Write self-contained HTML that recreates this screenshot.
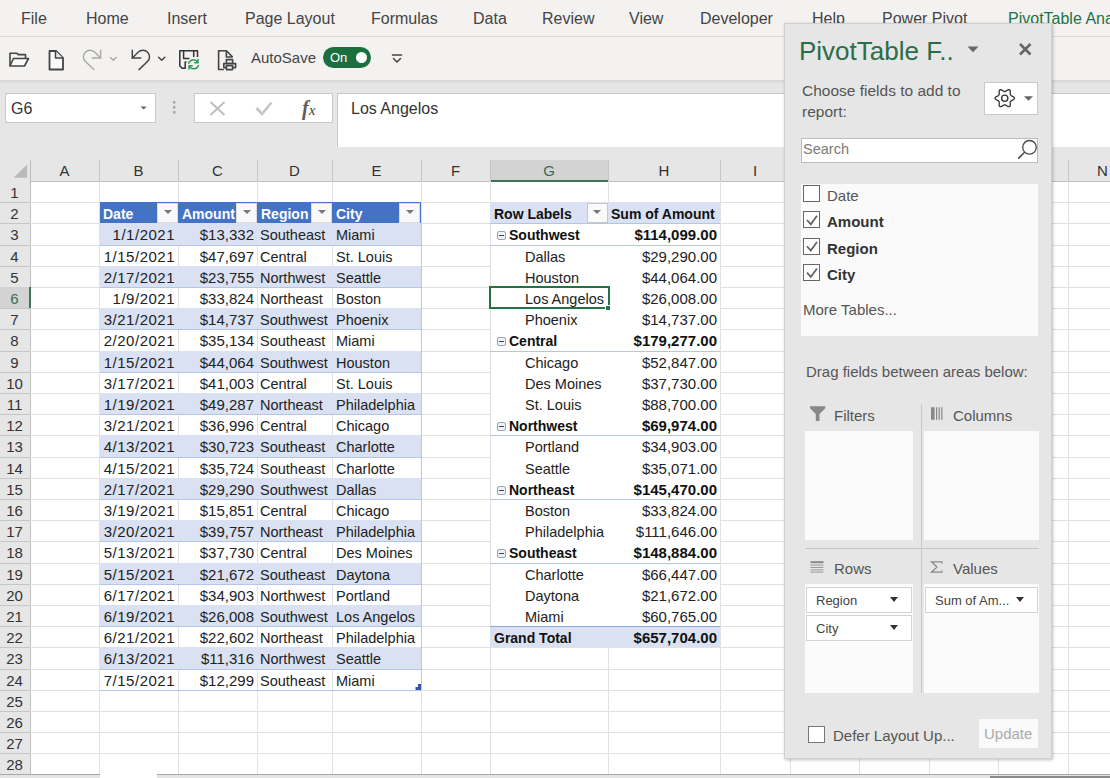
<!DOCTYPE html><html><head><meta charset="utf-8"><style>
*{margin:0;padding:0;box-sizing:border-box}
html,body{width:1110px;height:778px;overflow:hidden;background:#fff;font-family:"Liberation Sans", sans-serif;position:relative}
.a{position:absolute}
.t{position:absolute;white-space:nowrap;line-height:1}
</style></head><body>
<div class="a" style="left:0;top:0;width:1110px;height:36px;background:#f3f2f1"></div>
<div class="a" style="left:0;top:36px;width:1110px;height:1px;background:#dcdad8"></div>
<div class="t" style="left:21px;top:11px;font-size:16px;color:#444">File</div>
<div class="t" style="left:86px;top:11px;font-size:16px;color:#444">Home</div>
<div class="t" style="left:167px;top:11px;font-size:16px;color:#444">Insert</div>
<div class="t" style="left:245px;top:11px;font-size:16px;color:#444">Page Layout</div>
<div class="t" style="left:371px;top:11px;font-size:16px;color:#444">Formulas</div>
<div class="t" style="left:473px;top:11px;font-size:16px;color:#444">Data</div>
<div class="t" style="left:542px;top:11px;font-size:16px;color:#444">Review</div>
<div class="t" style="left:629px;top:11px;font-size:16px;color:#444">View</div>
<div class="t" style="left:700px;top:11px;font-size:16px;color:#444">Developer</div>
<div class="t" style="left:812px;top:11px;font-size:16px;color:#444">Help</div>
<div class="t" style="left:882px;top:11px;font-size:16px;color:#444">Power Pivot</div>
<div class="t" style="left:1008px;top:11px;font-size:16px;color:#217346">PivotTable Analyze</div>
<div class="a" style="left:0;top:37px;width:1110px;height:43px;background:#f3f2f1"></div>
<div class="a" style="left:0;top:80px;width:1110px;height:4px;background:linear-gradient(#d6d6d6,#e6e6e6)"></div>
<svg class="a" style="left:0;top:40px" width="420" height="40" viewBox="0 40 420 40" fill="none" stroke-linejoin="round">
<path d="M10,66 V53.2 H17 L18.3,54.6 H25.5 V58.5" stroke="#444" stroke-width="1.6"/>
<path d="M10,66 L13.5,58.5 H28.5 L24.5,66 Z" stroke="#444" stroke-width="1.6" fill="#fafafa"/>
<path d="M49.5,51 H56 L63,58 V69.5 H49.5 Z" stroke="#444" stroke-width="1.8" fill="#fafafa"/>
<path d="M55.5,51 V58 H63" stroke="#444" stroke-width="1.5" fill="#e8e8e8"/>
<g stroke="#a8a8a8" stroke-width="1.4" stroke-linecap="round">
<path d="M100.6,50.2 V58 H92.2"/>
<path d="M100.6,58 L94.6,52.1 A6.6,6.6 0 1 0 85.4,61.6 L93.9,69.6"/>
<path d="M110.5,57.5 L113.3,60.2 L116.1,57.5"/>
</g>
<g stroke="#444" stroke-width="1.45" stroke-linecap="round">
<path d="M132.3,50.2 V58 H140.7"/>
<path d="M132.3,58 L138.3,52.1 A6.6,6.6 0 1 1 147.5,61.6 L139,69.6"/>
<path d="M158.6,57.3 L161.7,60.3 L164.8,57.3"/>
</g>
<g stroke="#333" stroke-width="1.5" fill="none">
<path d="M197.5,57 V50.8 H179.8 V66 L182.2,68.3 H185.2 V62 H186.5"/>
<path d="M183.6,51 V58.4 H189.5"/>
<path d="M193.7,51 V57"/>
</g>
<g stroke="#2e9a55" stroke-width="1.5" fill="none" stroke-linecap="round">
<path d="M188.6,63.2 A5,5 0 0 1 197.6,62.3"/>
<path d="M198,59.6 V62.8 H194.8"/>
<path d="M198.4,65.4 A5,5 0 0 1 189.4,66.3"/>
<path d="M189,69 V65.8 H192.2"/>
</g>
<g stroke="#444" stroke-width="1.6">
<path d="M223.8,69.5 H218.6 V50.8 H226.4 L232.6,57"/>
<path d="M226.4,51 V57 H232.6"/>
<rect x="226.4" y="59.6" width="6.2" height="4" fill="#f3f2f1"/>
<rect x="223.8" y="63.6" width="11.8" height="4" fill="#f3f2f1"/>
<rect x="226.4" y="65.6" width="6.2" height="4" fill="#f3f2f1"/>
</g>
<g stroke="#444" stroke-width="1.5" stroke-linecap="round">
<path d="M392.5,55 H401.5"/>
<path d="M393.5,58.5 L397,62 L400.5,58.5"/>
</g>
</svg>
<div class="t" style="left:251px;top:50px;font-size:15px;color:#444">AutoSave</div>
<div class="a" style="left:323px;top:47px;width:48px;height:21px;border-radius:11px;background:#1b6f3f"></div>
<div class="t" style="left:330px;top:51px;font-size:13px;color:#fff">On</div>
<div class="a" style="left:356px;top:52px;width:11px;height:11px;border-radius:50%;background:#fff"></div>
<div class="a" style="left:0;top:84px;width:1110px;height:63px;background:#e6e6e6"></div>
<div class="a" style="left:5px;top:93px;width:151px;height:30px;background:#fff;border:1px solid #c8c8c8"></div>
<div class="t" style="left:11px;top:101px;font-size:16px;color:#333">G6</div>
<div class="a" style="left:194px;top:93px;width:139px;height:30px;background:#fff;border:1px solid #c8c8c8"></div>
<div class="a" style="left:337px;top:93px;width:800px;height:54px;background:#fff;border:1px solid #c8c8c8;border-bottom:none"></div>
<div class="t" style="left:351px;top:101px;font-size:16px;color:#333">Los Angelos</div>
<svg class="a" style="left:130px;top:95px" width="200" height="30" viewBox="130 95 200 30" fill="none">
<path d="M140.5,106.5 H146.8 L143.65,109.5 Z" fill="#666"/>
<g fill="#a8a8a8"><rect x="173" y="101" width="2.4" height="2.6"/><rect x="173" y="106" width="2.4" height="2.6"/><rect x="173" y="111" width="2.4" height="2.6"/></g>
<path d="M210.5,102 L224.5,115 M224.5,102 L210.5,115" stroke="#bdbdbd" stroke-width="1.8"/>
<path d="M256.5,108 L262,114 L271.5,102.5" stroke="#c6c6c6" stroke-width="2.6"/>
</svg>
<div class="t" style="left:302px;top:98px;font-family:&quot;Liberation Serif&quot;,serif;font-style:italic;font-weight:bold;font-size:20px;color:#5c5c5c">f<span style="font-size:15px;font-weight:normal;color:#444">x</span></div>
<div class="a" style="left:0;top:147px;width:1110px;height:34px;background:#e6e6e6"></div>
<div class="a" style="left:0;top:181px;width:1110px;height:1px;background:#bdbdbd"></div>
<div class="a" style="left:0;top:181px;width:30px;height:597px;background:#e6e6e6"></div>
<div class="a" style="left:30px;top:160px;width:1px;height:618px;background:#bdbdbd"></div>
<svg class="a" style="left:0;top:160px" width="30" height="21"><path d="M13.5,17.8 L27.2,4.4 V17.8 Z" fill="#bababa"/></svg>
<div class="a" style="left:490px;top:160px;width:119px;height:21px;background:#d3d3d3"></div>
<div class="a" style="left:490px;top:180px;width:119px;height:2px;background:#3d7556"></div>
<div class="a" style="left:99px;top:160px;width:1px;height:21px;background:#c6c6c6"></div>
<div class="t" style="left:30px;width:69px;text-align:center;top:163px;font-size:15px;color:#333">A</div>
<div class="a" style="left:178px;top:160px;width:1px;height:21px;background:#c6c6c6"></div>
<div class="t" style="left:99px;width:79px;text-align:center;top:163px;font-size:15px;color:#333">B</div>
<div class="a" style="left:257px;top:160px;width:1px;height:21px;background:#c6c6c6"></div>
<div class="t" style="left:178px;width:79px;text-align:center;top:163px;font-size:15px;color:#333">C</div>
<div class="a" style="left:332px;top:160px;width:1px;height:21px;background:#c6c6c6"></div>
<div class="t" style="left:257px;width:75px;text-align:center;top:163px;font-size:15px;color:#333">D</div>
<div class="a" style="left:421px;top:160px;width:1px;height:21px;background:#c6c6c6"></div>
<div class="t" style="left:332px;width:89px;text-align:center;top:163px;font-size:15px;color:#333">E</div>
<div class="a" style="left:490px;top:160px;width:1px;height:21px;background:#c6c6c6"></div>
<div class="t" style="left:421px;width:69px;text-align:center;top:163px;font-size:15px;color:#333">F</div>
<div class="a" style="left:608px;top:160px;width:1px;height:21px;background:#c6c6c6"></div>
<div class="t" style="left:490px;width:118px;text-align:center;top:163px;font-size:15px;color:#3b6e55">G</div>
<div class="a" style="left:720px;top:160px;width:1px;height:21px;background:#c6c6c6"></div>
<div class="t" style="left:608px;width:112px;text-align:center;top:163px;font-size:15px;color:#333">H</div>
<div class="a" style="left:790px;top:160px;width:1px;height:21px;background:#c6c6c6"></div>
<div class="t" style="left:720px;width:70px;text-align:center;top:163px;font-size:15px;color:#333">I</div>
<div class="a" style="left:859px;top:160px;width:1px;height:21px;background:#c6c6c6"></div>
<div class="t" style="left:790px;width:69px;text-align:center;top:163px;font-size:15px;color:#333">J</div>
<div class="a" style="left:929px;top:160px;width:1px;height:21px;background:#c6c6c6"></div>
<div class="t" style="left:859px;width:70px;text-align:center;top:163px;font-size:15px;color:#333">K</div>
<div class="a" style="left:998px;top:160px;width:1px;height:21px;background:#c6c6c6"></div>
<div class="t" style="left:929px;width:69px;text-align:center;top:163px;font-size:15px;color:#333">L</div>
<div class="a" style="left:1068px;top:160px;width:1px;height:21px;background:#c6c6c6"></div>
<div class="t" style="left:998px;width:70px;text-align:center;top:163px;font-size:15px;color:#333">M</div>
<div class="a" style="left:1137px;top:160px;width:1px;height:21px;background:#c6c6c6"></div>
<div class="t" style="left:1068px;width:69px;text-align:center;top:163px;font-size:15px;color:#333">N</div>
<div class="a" style="left:99px;top:181px;width:1px;height:597px;background:#e1e1e1"></div>
<div class="a" style="left:178px;top:181px;width:1px;height:597px;background:#e1e1e1"></div>
<div class="a" style="left:257px;top:181px;width:1px;height:597px;background:#e1e1e1"></div>
<div class="a" style="left:332px;top:181px;width:1px;height:597px;background:#e1e1e1"></div>
<div class="a" style="left:421px;top:181px;width:1px;height:597px;background:#e1e1e1"></div>
<div class="a" style="left:490px;top:181px;width:1px;height:597px;background:#e1e1e1"></div>
<div class="a" style="left:608px;top:181px;width:1px;height:597px;background:#e1e1e1"></div>
<div class="a" style="left:720px;top:181px;width:1px;height:597px;background:#e1e1e1"></div>
<div class="a" style="left:790px;top:181px;width:1px;height:597px;background:#e1e1e1"></div>
<div class="a" style="left:859px;top:181px;width:1px;height:597px;background:#e1e1e1"></div>
<div class="a" style="left:929px;top:181px;width:1px;height:597px;background:#e1e1e1"></div>
<div class="a" style="left:998px;top:181px;width:1px;height:597px;background:#e1e1e1"></div>
<div class="a" style="left:1068px;top:181px;width:1px;height:597px;background:#e1e1e1"></div>
<div class="a" style="left:1137px;top:181px;width:1px;height:597px;background:#e1e1e1"></div>
<div class="a" style="left:30px;top:202px;width:1080px;height:1px;background:#e1e1e1"></div>
<div class="a" style="left:0;top:202px;width:30px;height:1px;background:#c6c6c6"></div>
<div class="a" style="left:30px;top:223px;width:1080px;height:1px;background:#e1e1e1"></div>
<div class="a" style="left:0;top:223px;width:30px;height:1px;background:#c6c6c6"></div>
<div class="a" style="left:30px;top:245px;width:1080px;height:1px;background:#e1e1e1"></div>
<div class="a" style="left:0;top:245px;width:30px;height:1px;background:#c6c6c6"></div>
<div class="a" style="left:30px;top:266px;width:1080px;height:1px;background:#e1e1e1"></div>
<div class="a" style="left:0;top:266px;width:30px;height:1px;background:#c6c6c6"></div>
<div class="a" style="left:30px;top:287px;width:1080px;height:1px;background:#e1e1e1"></div>
<div class="a" style="left:0;top:287px;width:30px;height:1px;background:#c6c6c6"></div>
<div class="a" style="left:30px;top:308px;width:1080px;height:1px;background:#e1e1e1"></div>
<div class="a" style="left:0;top:308px;width:30px;height:1px;background:#c6c6c6"></div>
<div class="a" style="left:30px;top:329px;width:1080px;height:1px;background:#e1e1e1"></div>
<div class="a" style="left:0;top:329px;width:30px;height:1px;background:#c6c6c6"></div>
<div class="a" style="left:30px;top:351px;width:1080px;height:1px;background:#e1e1e1"></div>
<div class="a" style="left:0;top:351px;width:30px;height:1px;background:#c6c6c6"></div>
<div class="a" style="left:30px;top:372px;width:1080px;height:1px;background:#e1e1e1"></div>
<div class="a" style="left:0;top:372px;width:30px;height:1px;background:#c6c6c6"></div>
<div class="a" style="left:30px;top:393px;width:1080px;height:1px;background:#e1e1e1"></div>
<div class="a" style="left:0;top:393px;width:30px;height:1px;background:#c6c6c6"></div>
<div class="a" style="left:30px;top:414px;width:1080px;height:1px;background:#e1e1e1"></div>
<div class="a" style="left:0;top:414px;width:30px;height:1px;background:#c6c6c6"></div>
<div class="a" style="left:30px;top:435px;width:1080px;height:1px;background:#e1e1e1"></div>
<div class="a" style="left:0;top:435px;width:30px;height:1px;background:#c6c6c6"></div>
<div class="a" style="left:30px;top:457px;width:1080px;height:1px;background:#e1e1e1"></div>
<div class="a" style="left:0;top:457px;width:30px;height:1px;background:#c6c6c6"></div>
<div class="a" style="left:30px;top:478px;width:1080px;height:1px;background:#e1e1e1"></div>
<div class="a" style="left:0;top:478px;width:30px;height:1px;background:#c6c6c6"></div>
<div class="a" style="left:30px;top:499px;width:1080px;height:1px;background:#e1e1e1"></div>
<div class="a" style="left:0;top:499px;width:30px;height:1px;background:#c6c6c6"></div>
<div class="a" style="left:30px;top:520px;width:1080px;height:1px;background:#e1e1e1"></div>
<div class="a" style="left:0;top:520px;width:30px;height:1px;background:#c6c6c6"></div>
<div class="a" style="left:30px;top:541px;width:1080px;height:1px;background:#e1e1e1"></div>
<div class="a" style="left:0;top:541px;width:30px;height:1px;background:#c6c6c6"></div>
<div class="a" style="left:30px;top:563px;width:1080px;height:1px;background:#e1e1e1"></div>
<div class="a" style="left:0;top:563px;width:30px;height:1px;background:#c6c6c6"></div>
<div class="a" style="left:30px;top:584px;width:1080px;height:1px;background:#e1e1e1"></div>
<div class="a" style="left:0;top:584px;width:30px;height:1px;background:#c6c6c6"></div>
<div class="a" style="left:30px;top:605px;width:1080px;height:1px;background:#e1e1e1"></div>
<div class="a" style="left:0;top:605px;width:30px;height:1px;background:#c6c6c6"></div>
<div class="a" style="left:30px;top:626px;width:1080px;height:1px;background:#e1e1e1"></div>
<div class="a" style="left:0;top:626px;width:30px;height:1px;background:#c6c6c6"></div>
<div class="a" style="left:30px;top:647px;width:1080px;height:1px;background:#e1e1e1"></div>
<div class="a" style="left:0;top:647px;width:30px;height:1px;background:#c6c6c6"></div>
<div class="a" style="left:30px;top:669px;width:1080px;height:1px;background:#e1e1e1"></div>
<div class="a" style="left:0;top:669px;width:30px;height:1px;background:#c6c6c6"></div>
<div class="a" style="left:30px;top:690px;width:1080px;height:1px;background:#e1e1e1"></div>
<div class="a" style="left:0;top:690px;width:30px;height:1px;background:#c6c6c6"></div>
<div class="a" style="left:30px;top:711px;width:1080px;height:1px;background:#e1e1e1"></div>
<div class="a" style="left:0;top:711px;width:30px;height:1px;background:#c6c6c6"></div>
<div class="a" style="left:30px;top:732px;width:1080px;height:1px;background:#e1e1e1"></div>
<div class="a" style="left:0;top:732px;width:30px;height:1px;background:#c6c6c6"></div>
<div class="a" style="left:30px;top:753px;width:1080px;height:1px;background:#e1e1e1"></div>
<div class="a" style="left:0;top:753px;width:30px;height:1px;background:#c6c6c6"></div>
<div class="a" style="left:30px;top:775px;width:1080px;height:1px;background:#e1e1e1"></div>
<div class="a" style="left:0;top:775px;width:30px;height:1px;background:#c6c6c6"></div>
<div class="a" style="left:0;top:287px;width:31px;height:21px;background:#d3d3d3;border-right:2px solid #3d7556"></div>
<div class="t" style="left:0;width:29px;text-align:center;top:185px;font-size:15px;color:#333">1</div>
<div class="t" style="left:0;width:29px;text-align:center;top:206px;font-size:15px;color:#333">2</div>
<div class="t" style="left:0;width:29px;text-align:center;top:227px;font-size:15px;color:#333">3</div>
<div class="t" style="left:0;width:29px;text-align:center;top:249px;font-size:15px;color:#333">4</div>
<div class="t" style="left:0;width:29px;text-align:center;top:270px;font-size:15px;color:#333">5</div>
<div class="t" style="left:0;width:29px;text-align:center;top:291px;font-size:15px;color:#3b6e55">6</div>
<div class="t" style="left:0;width:29px;text-align:center;top:312px;font-size:15px;color:#333">7</div>
<div class="t" style="left:0;width:29px;text-align:center;top:333px;font-size:15px;color:#333">8</div>
<div class="t" style="left:0;width:29px;text-align:center;top:355px;font-size:15px;color:#333">9</div>
<div class="t" style="left:0;width:29px;text-align:center;top:376px;font-size:15px;color:#333">10</div>
<div class="t" style="left:0;width:29px;text-align:center;top:397px;font-size:15px;color:#333">11</div>
<div class="t" style="left:0;width:29px;text-align:center;top:418px;font-size:15px;color:#333">12</div>
<div class="t" style="left:0;width:29px;text-align:center;top:439px;font-size:15px;color:#333">13</div>
<div class="t" style="left:0;width:29px;text-align:center;top:461px;font-size:15px;color:#333">14</div>
<div class="t" style="left:0;width:29px;text-align:center;top:482px;font-size:15px;color:#333">15</div>
<div class="t" style="left:0;width:29px;text-align:center;top:503px;font-size:15px;color:#333">16</div>
<div class="t" style="left:0;width:29px;text-align:center;top:524px;font-size:15px;color:#333">17</div>
<div class="t" style="left:0;width:29px;text-align:center;top:545px;font-size:15px;color:#333">18</div>
<div class="t" style="left:0;width:29px;text-align:center;top:567px;font-size:15px;color:#333">19</div>
<div class="t" style="left:0;width:29px;text-align:center;top:588px;font-size:15px;color:#333">20</div>
<div class="t" style="left:0;width:29px;text-align:center;top:609px;font-size:15px;color:#333">21</div>
<div class="t" style="left:0;width:29px;text-align:center;top:630px;font-size:15px;color:#333">22</div>
<div class="t" style="left:0;width:29px;text-align:center;top:651px;font-size:15px;color:#333">23</div>
<div class="t" style="left:0;width:29px;text-align:center;top:673px;font-size:15px;color:#333">24</div>
<div class="t" style="left:0;width:29px;text-align:center;top:694px;font-size:15px;color:#333">25</div>
<div class="t" style="left:0;width:29px;text-align:center;top:715px;font-size:15px;color:#333">26</div>
<div class="t" style="left:0;width:29px;text-align:center;top:736px;font-size:15px;color:#333">27</div>
<div class="t" style="left:0;width:29px;text-align:center;top:757px;font-size:15px;color:#333">28</div>
<div class="a" style="left:100px;top:202px;width:321px;height:21px;background:#4472c4"></div>
<div class="t" style="left:103px;top:207px;font-size:14px;font-weight:bold;color:#fff">Date</div>
<div class="a" style="left:157px;top:203px;width:21px;height:20px;background:#f9f9f9;border:1px solid #dcdcdc"></div>
<div class="a" style="left:164px;top:210px;width:0;height:0;border-left:4px solid transparent;border-right:4px solid transparent;border-top:4px solid #777"></div>
<div class="t" style="left:182px;top:207px;font-size:14px;font-weight:bold;color:#fff">Amount</div>
<div class="a" style="left:236px;top:203px;width:21px;height:20px;background:#f9f9f9;border:1px solid #dcdcdc"></div>
<div class="a" style="left:243px;top:210px;width:0;height:0;border-left:4px solid transparent;border-right:4px solid transparent;border-top:4px solid #777"></div>
<div class="t" style="left:261px;top:207px;font-size:14px;font-weight:bold;color:#fff">Region</div>
<div class="a" style="left:311px;top:203px;width:21px;height:20px;background:#f9f9f9;border:1px solid #dcdcdc"></div>
<div class="a" style="left:318px;top:210px;width:0;height:0;border-left:4px solid transparent;border-right:4px solid transparent;border-top:4px solid #777"></div>
<div class="t" style="left:336px;top:207px;font-size:14px;font-weight:bold;color:#fff">City</div>
<div class="a" style="left:399px;top:203px;width:21px;height:20px;background:#f9f9f9;border:1px solid #dcdcdc"></div>
<div class="a" style="left:406px;top:210px;width:0;height:0;border-left:4px solid transparent;border-right:4px solid transparent;border-top:4px solid #777"></div>
<div class="a" style="left:100px;top:223px;width:321px;height:22px;background:#d9e1f2"></div>
<div class="a" style="left:100px;top:245px;width:321px;height:1px;background:#b4c6e7"></div>
<div class="t" style="left:99px;width:76px;text-align:right;top:227px;font-size:15px;letter-spacing:0.5px;color:#222">1/1/2021</div>
<div class="t" style="left:178px;width:76px;text-align:right;top:227px;font-size:15px;color:#222">$13,332</div>
<div class="t" style="left:260px;top:227.5px;font-size:14.5px;color:#222">Southeast</div>
<div class="t" style="left:336px;top:227.5px;font-size:14.5px;color:#222">Miami</div>
<div class="a" style="left:100px;top:266px;width:321px;height:1px;background:#b4c6e7"></div>
<div class="t" style="left:99px;width:76px;text-align:right;top:249px;font-size:15px;letter-spacing:0.5px;color:#222">1/15/2021</div>
<div class="t" style="left:178px;width:76px;text-align:right;top:249px;font-size:15px;color:#222">$47,697</div>
<div class="t" style="left:260px;top:249.5px;font-size:14.5px;color:#222">Central</div>
<div class="t" style="left:336px;top:249.5px;font-size:14.5px;color:#222">St. Louis</div>
<div class="a" style="left:100px;top:266px;width:321px;height:21px;background:#d9e1f2"></div>
<div class="a" style="left:100px;top:287px;width:321px;height:1px;background:#b4c6e7"></div>
<div class="t" style="left:99px;width:76px;text-align:right;top:270px;font-size:15px;letter-spacing:0.5px;color:#222">2/17/2021</div>
<div class="t" style="left:178px;width:76px;text-align:right;top:270px;font-size:15px;color:#222">$23,755</div>
<div class="t" style="left:260px;top:270.5px;font-size:14.5px;color:#222">Northwest</div>
<div class="t" style="left:336px;top:270.5px;font-size:14.5px;color:#222">Seattle</div>
<div class="a" style="left:100px;top:308px;width:321px;height:1px;background:#b4c6e7"></div>
<div class="t" style="left:99px;width:76px;text-align:right;top:291px;font-size:15px;letter-spacing:0.5px;color:#222">1/9/2021</div>
<div class="t" style="left:178px;width:76px;text-align:right;top:291px;font-size:15px;color:#222">$33,824</div>
<div class="t" style="left:260px;top:291.5px;font-size:14.5px;color:#222">Northeast</div>
<div class="t" style="left:336px;top:291.5px;font-size:14.5px;color:#222">Boston</div>
<div class="a" style="left:100px;top:308px;width:321px;height:21px;background:#d9e1f2"></div>
<div class="a" style="left:100px;top:329px;width:321px;height:1px;background:#b4c6e7"></div>
<div class="t" style="left:99px;width:76px;text-align:right;top:312px;font-size:15px;letter-spacing:0.5px;color:#222">3/21/2021</div>
<div class="t" style="left:178px;width:76px;text-align:right;top:312px;font-size:15px;color:#222">$14,737</div>
<div class="t" style="left:260px;top:312.5px;font-size:14.5px;color:#222">Southwest</div>
<div class="t" style="left:336px;top:312.5px;font-size:14.5px;color:#222">Phoenix</div>
<div class="a" style="left:100px;top:351px;width:321px;height:1px;background:#b4c6e7"></div>
<div class="t" style="left:99px;width:76px;text-align:right;top:333px;font-size:15px;letter-spacing:0.5px;color:#222">2/20/2021</div>
<div class="t" style="left:178px;width:76px;text-align:right;top:333px;font-size:15px;color:#222">$35,134</div>
<div class="t" style="left:260px;top:333.5px;font-size:14.5px;color:#222">Southeast</div>
<div class="t" style="left:336px;top:333.5px;font-size:14.5px;color:#222">Miami</div>
<div class="a" style="left:100px;top:351px;width:321px;height:21px;background:#d9e1f2"></div>
<div class="a" style="left:100px;top:372px;width:321px;height:1px;background:#b4c6e7"></div>
<div class="t" style="left:99px;width:76px;text-align:right;top:355px;font-size:15px;letter-spacing:0.5px;color:#222">1/15/2021</div>
<div class="t" style="left:178px;width:76px;text-align:right;top:355px;font-size:15px;color:#222">$44,064</div>
<div class="t" style="left:260px;top:355.5px;font-size:14.5px;color:#222">Southwest</div>
<div class="t" style="left:336px;top:355.5px;font-size:14.5px;color:#222">Houston</div>
<div class="a" style="left:100px;top:393px;width:321px;height:1px;background:#b4c6e7"></div>
<div class="t" style="left:99px;width:76px;text-align:right;top:376px;font-size:15px;letter-spacing:0.5px;color:#222">3/17/2021</div>
<div class="t" style="left:178px;width:76px;text-align:right;top:376px;font-size:15px;color:#222">$41,003</div>
<div class="t" style="left:260px;top:376.5px;font-size:14.5px;color:#222">Central</div>
<div class="t" style="left:336px;top:376.5px;font-size:14.5px;color:#222">St. Louis</div>
<div class="a" style="left:100px;top:393px;width:321px;height:21px;background:#d9e1f2"></div>
<div class="a" style="left:100px;top:414px;width:321px;height:1px;background:#b4c6e7"></div>
<div class="t" style="left:99px;width:76px;text-align:right;top:397px;font-size:15px;letter-spacing:0.5px;color:#222">1/19/2021</div>
<div class="t" style="left:178px;width:76px;text-align:right;top:397px;font-size:15px;color:#222">$49,287</div>
<div class="t" style="left:260px;top:397.5px;font-size:14.5px;color:#222">Northeast</div>
<div class="t" style="left:336px;top:397.5px;font-size:14.5px;color:#222">Philadelphia</div>
<div class="a" style="left:100px;top:435px;width:321px;height:1px;background:#b4c6e7"></div>
<div class="t" style="left:99px;width:76px;text-align:right;top:418px;font-size:15px;letter-spacing:0.5px;color:#222">3/21/2021</div>
<div class="t" style="left:178px;width:76px;text-align:right;top:418px;font-size:15px;color:#222">$36,996</div>
<div class="t" style="left:260px;top:418.5px;font-size:14.5px;color:#222">Central</div>
<div class="t" style="left:336px;top:418.5px;font-size:14.5px;color:#222">Chicago</div>
<div class="a" style="left:100px;top:435px;width:321px;height:22px;background:#d9e1f2"></div>
<div class="a" style="left:100px;top:457px;width:321px;height:1px;background:#b4c6e7"></div>
<div class="t" style="left:99px;width:76px;text-align:right;top:439px;font-size:15px;letter-spacing:0.5px;color:#222">4/13/2021</div>
<div class="t" style="left:178px;width:76px;text-align:right;top:439px;font-size:15px;color:#222">$30,723</div>
<div class="t" style="left:260px;top:439.5px;font-size:14.5px;color:#222">Southeast</div>
<div class="t" style="left:336px;top:439.5px;font-size:14.5px;color:#222">Charlotte</div>
<div class="a" style="left:100px;top:478px;width:321px;height:1px;background:#b4c6e7"></div>
<div class="t" style="left:99px;width:76px;text-align:right;top:461px;font-size:15px;letter-spacing:0.5px;color:#222">4/15/2021</div>
<div class="t" style="left:178px;width:76px;text-align:right;top:461px;font-size:15px;color:#222">$35,724</div>
<div class="t" style="left:260px;top:461.5px;font-size:14.5px;color:#222">Southeast</div>
<div class="t" style="left:336px;top:461.5px;font-size:14.5px;color:#222">Charlotte</div>
<div class="a" style="left:100px;top:478px;width:321px;height:21px;background:#d9e1f2"></div>
<div class="a" style="left:100px;top:499px;width:321px;height:1px;background:#b4c6e7"></div>
<div class="t" style="left:99px;width:76px;text-align:right;top:482px;font-size:15px;letter-spacing:0.5px;color:#222">2/17/2021</div>
<div class="t" style="left:178px;width:76px;text-align:right;top:482px;font-size:15px;color:#222">$29,290</div>
<div class="t" style="left:260px;top:482.5px;font-size:14.5px;color:#222">Southwest</div>
<div class="t" style="left:336px;top:482.5px;font-size:14.5px;color:#222">Dallas</div>
<div class="a" style="left:100px;top:520px;width:321px;height:1px;background:#b4c6e7"></div>
<div class="t" style="left:99px;width:76px;text-align:right;top:503px;font-size:15px;letter-spacing:0.5px;color:#222">3/19/2021</div>
<div class="t" style="left:178px;width:76px;text-align:right;top:503px;font-size:15px;color:#222">$15,851</div>
<div class="t" style="left:260px;top:503.5px;font-size:14.5px;color:#222">Central</div>
<div class="t" style="left:336px;top:503.5px;font-size:14.5px;color:#222">Chicago</div>
<div class="a" style="left:100px;top:520px;width:321px;height:21px;background:#d9e1f2"></div>
<div class="a" style="left:100px;top:541px;width:321px;height:1px;background:#b4c6e7"></div>
<div class="t" style="left:99px;width:76px;text-align:right;top:524px;font-size:15px;letter-spacing:0.5px;color:#222">3/20/2021</div>
<div class="t" style="left:178px;width:76px;text-align:right;top:524px;font-size:15px;color:#222">$39,757</div>
<div class="t" style="left:260px;top:524.5px;font-size:14.5px;color:#222">Northeast</div>
<div class="t" style="left:336px;top:524.5px;font-size:14.5px;color:#222">Philadelphia</div>
<div class="a" style="left:100px;top:563px;width:321px;height:1px;background:#b4c6e7"></div>
<div class="t" style="left:99px;width:76px;text-align:right;top:545px;font-size:15px;letter-spacing:0.5px;color:#222">5/13/2021</div>
<div class="t" style="left:178px;width:76px;text-align:right;top:545px;font-size:15px;color:#222">$37,730</div>
<div class="t" style="left:260px;top:545.5px;font-size:14.5px;color:#222">Central</div>
<div class="t" style="left:336px;top:545.5px;font-size:14.5px;color:#222">Des Moines</div>
<div class="a" style="left:100px;top:563px;width:321px;height:21px;background:#d9e1f2"></div>
<div class="a" style="left:100px;top:584px;width:321px;height:1px;background:#b4c6e7"></div>
<div class="t" style="left:99px;width:76px;text-align:right;top:567px;font-size:15px;letter-spacing:0.5px;color:#222">5/15/2021</div>
<div class="t" style="left:178px;width:76px;text-align:right;top:567px;font-size:15px;color:#222">$21,672</div>
<div class="t" style="left:260px;top:567.5px;font-size:14.5px;color:#222">Southeast</div>
<div class="t" style="left:336px;top:567.5px;font-size:14.5px;color:#222">Daytona</div>
<div class="a" style="left:100px;top:605px;width:321px;height:1px;background:#b4c6e7"></div>
<div class="t" style="left:99px;width:76px;text-align:right;top:588px;font-size:15px;letter-spacing:0.5px;color:#222">6/17/2021</div>
<div class="t" style="left:178px;width:76px;text-align:right;top:588px;font-size:15px;color:#222">$34,903</div>
<div class="t" style="left:260px;top:588.5px;font-size:14.5px;color:#222">Northwest</div>
<div class="t" style="left:336px;top:588.5px;font-size:14.5px;color:#222">Portland</div>
<div class="a" style="left:100px;top:605px;width:321px;height:21px;background:#d9e1f2"></div>
<div class="a" style="left:100px;top:626px;width:321px;height:1px;background:#b4c6e7"></div>
<div class="t" style="left:99px;width:76px;text-align:right;top:609px;font-size:15px;letter-spacing:0.5px;color:#222">6/19/2021</div>
<div class="t" style="left:178px;width:76px;text-align:right;top:609px;font-size:15px;color:#222">$26,008</div>
<div class="t" style="left:260px;top:609.5px;font-size:14.5px;color:#222">Southwest</div>
<div class="t" style="left:336px;top:609.5px;font-size:14.5px;color:#222">Los Angelos</div>
<div class="a" style="left:100px;top:647px;width:321px;height:1px;background:#b4c6e7"></div>
<div class="t" style="left:99px;width:76px;text-align:right;top:630px;font-size:15px;letter-spacing:0.5px;color:#222">6/21/2021</div>
<div class="t" style="left:178px;width:76px;text-align:right;top:630px;font-size:15px;color:#222">$22,602</div>
<div class="t" style="left:260px;top:630.5px;font-size:14.5px;color:#222">Northeast</div>
<div class="t" style="left:336px;top:630.5px;font-size:14.5px;color:#222">Philadelphia</div>
<div class="a" style="left:100px;top:647px;width:321px;height:22px;background:#d9e1f2"></div>
<div class="a" style="left:100px;top:669px;width:321px;height:1px;background:#b4c6e7"></div>
<div class="t" style="left:99px;width:76px;text-align:right;top:651px;font-size:15px;letter-spacing:0.5px;color:#222">6/13/2021</div>
<div class="t" style="left:178px;width:76px;text-align:right;top:651px;font-size:15px;color:#222">$11,316</div>
<div class="t" style="left:260px;top:651.5px;font-size:14.5px;color:#222">Northwest</div>
<div class="t" style="left:336px;top:651.5px;font-size:14.5px;color:#222">Seattle</div>
<div class="a" style="left:100px;top:690px;width:321px;height:1px;background:#b4c6e7"></div>
<div class="t" style="left:99px;width:76px;text-align:right;top:673px;font-size:15px;letter-spacing:0.5px;color:#222">7/15/2021</div>
<div class="t" style="left:178px;width:76px;text-align:right;top:673px;font-size:15px;color:#222">$12,299</div>
<div class="t" style="left:260px;top:673.5px;font-size:14.5px;color:#222">Southeast</div>
<div class="t" style="left:336px;top:673.5px;font-size:14.5px;color:#222">Miami</div>
<div class="a" style="left:421px;top:223px;width:1px;height:467px;background:#bcc8e0"></div>
<svg class="a" style="left:415px;top:684px" width="7" height="7"><path d="M0.5,3 H3 V0 H6 V6 H0.5 Z" fill="#3c54ad"/></svg>
<div class="a" style="left:491px;top:223px;width:229px;height:424px;background:#fff"></div>
<div class="a" style="left:490px;top:202px;width:230px;height:21px;background:#d9e1f2"></div>
<div class="a" style="left:490px;top:223px;width:230px;height:1px;background:#b4c6e7"></div>
<div class="t" style="left:494px;top:207px;font-size:14px;font-weight:bold;color:#111">Row Labels</div>
<div class="t" style="left:611px;top:207px;font-size:14px;font-weight:bold;color:#111">Sum of Amount</div>
<div class="a" style="left:587px;top:203px;width:21px;height:20px;background:#fafafa;border:1px solid #c8c8c8"></div>
<div class="a" style="left:593px;top:210px;width:0;height:0;border-left:4px solid transparent;border-right:4px solid transparent;border-top:4px solid #777"></div>
<div class="a" style="left:490px;top:245px;width:230px;height:1px;background:#b4c6e7"></div>
<div class="a" style="left:497px;top:231px;width:9px;height:9px;border:1px solid #9aa3b3;border-radius:2px;background:#eef1f6"></div>
<div class="a" style="left:499px;top:235px;width:5px;height:1.3px;background:#444"></div>
<div class="t" style="left:509px;top:228px;font-size:14px;font-weight:bold;color:#111">Southwest</div>
<div class="t" style="left:608px;width:109px;text-align:right;top:227px;font-size:15px;font-weight:bold;color:#111">$114,099.00</div>
<div class="t" style="left:525px;top:249.5px;font-size:14.5px;color:#222">Dallas</div>
<div class="t" style="left:608px;width:109px;text-align:right;top:249px;font-size:15px;color:#222">$29,290.00</div>
<div class="t" style="left:525px;top:270.5px;font-size:14.5px;color:#222">Houston</div>
<div class="t" style="left:608px;width:109px;text-align:right;top:270px;font-size:15px;color:#222">$44,064.00</div>
<div class="t" style="left:525px;top:291.5px;font-size:14.5px;color:#222">Los Angelos</div>
<div class="t" style="left:608px;width:109px;text-align:right;top:291px;font-size:15px;color:#222">$26,008.00</div>
<div class="t" style="left:525px;top:312.5px;font-size:14.5px;color:#222">Phoenix</div>
<div class="t" style="left:608px;width:109px;text-align:right;top:312px;font-size:15px;color:#222">$14,737.00</div>
<div class="a" style="left:490px;top:351px;width:230px;height:1px;background:#b4c6e7"></div>
<div class="a" style="left:497px;top:337px;width:9px;height:9px;border:1px solid #9aa3b3;border-radius:2px;background:#eef1f6"></div>
<div class="a" style="left:499px;top:341px;width:5px;height:1.3px;background:#444"></div>
<div class="t" style="left:509px;top:334px;font-size:14px;font-weight:bold;color:#111">Central</div>
<div class="t" style="left:608px;width:109px;text-align:right;top:333px;font-size:15px;font-weight:bold;color:#111">$179,277.00</div>
<div class="t" style="left:525px;top:355.5px;font-size:14.5px;color:#222">Chicago</div>
<div class="t" style="left:608px;width:109px;text-align:right;top:355px;font-size:15px;color:#222">$52,847.00</div>
<div class="t" style="left:525px;top:376.5px;font-size:14.5px;color:#222">Des Moines</div>
<div class="t" style="left:608px;width:109px;text-align:right;top:376px;font-size:15px;color:#222">$37,730.00</div>
<div class="t" style="left:525px;top:397.5px;font-size:14.5px;color:#222">St. Louis</div>
<div class="t" style="left:608px;width:109px;text-align:right;top:397px;font-size:15px;color:#222">$88,700.00</div>
<div class="a" style="left:490px;top:435px;width:230px;height:1px;background:#b4c6e7"></div>
<div class="a" style="left:497px;top:422px;width:9px;height:9px;border:1px solid #9aa3b3;border-radius:2px;background:#eef1f6"></div>
<div class="a" style="left:499px;top:426px;width:5px;height:1.3px;background:#444"></div>
<div class="t" style="left:509px;top:419px;font-size:14px;font-weight:bold;color:#111">Northwest</div>
<div class="t" style="left:608px;width:109px;text-align:right;top:418px;font-size:15px;font-weight:bold;color:#111">$69,974.00</div>
<div class="t" style="left:525px;top:439.5px;font-size:14.5px;color:#222">Portland</div>
<div class="t" style="left:608px;width:109px;text-align:right;top:439px;font-size:15px;color:#222">$34,903.00</div>
<div class="t" style="left:525px;top:461.5px;font-size:14.5px;color:#222">Seattle</div>
<div class="t" style="left:608px;width:109px;text-align:right;top:461px;font-size:15px;color:#222">$35,071.00</div>
<div class="a" style="left:490px;top:499px;width:230px;height:1px;background:#b4c6e7"></div>
<div class="a" style="left:497px;top:486px;width:9px;height:9px;border:1px solid #9aa3b3;border-radius:2px;background:#eef1f6"></div>
<div class="a" style="left:499px;top:490px;width:5px;height:1.3px;background:#444"></div>
<div class="t" style="left:509px;top:483px;font-size:14px;font-weight:bold;color:#111">Northeast</div>
<div class="t" style="left:608px;width:109px;text-align:right;top:482px;font-size:15px;font-weight:bold;color:#111">$145,470.00</div>
<div class="t" style="left:525px;top:503.5px;font-size:14.5px;color:#222">Boston</div>
<div class="t" style="left:608px;width:109px;text-align:right;top:503px;font-size:15px;color:#222">$33,824.00</div>
<div class="t" style="left:525px;top:524.5px;font-size:14.5px;color:#222">Philadelphia</div>
<div class="t" style="left:608px;width:109px;text-align:right;top:524px;font-size:15px;color:#222">$111,646.00</div>
<div class="a" style="left:490px;top:563px;width:230px;height:1px;background:#b4c6e7"></div>
<div class="a" style="left:497px;top:549px;width:9px;height:9px;border:1px solid #9aa3b3;border-radius:2px;background:#eef1f6"></div>
<div class="a" style="left:499px;top:553px;width:5px;height:1.3px;background:#444"></div>
<div class="t" style="left:509px;top:546px;font-size:14px;font-weight:bold;color:#111">Southeast</div>
<div class="t" style="left:608px;width:109px;text-align:right;top:545px;font-size:15px;font-weight:bold;color:#111">$148,884.00</div>
<div class="t" style="left:525px;top:567.5px;font-size:14.5px;color:#222">Charlotte</div>
<div class="t" style="left:608px;width:109px;text-align:right;top:567px;font-size:15px;color:#222">$66,447.00</div>
<div class="t" style="left:525px;top:588.5px;font-size:14.5px;color:#222">Daytona</div>
<div class="t" style="left:608px;width:109px;text-align:right;top:588px;font-size:15px;color:#222">$21,672.00</div>
<div class="t" style="left:525px;top:609.5px;font-size:14.5px;color:#222">Miami</div>
<div class="t" style="left:608px;width:109px;text-align:right;top:609px;font-size:15px;color:#222">$60,765.00</div>
<div class="a" style="left:490px;top:626px;width:230px;height:21px;background:#d9e1f2"></div>
<div class="a" style="left:490px;top:626px;width:230px;height:1px;background:#8ea9db"></div>
<div class="t" style="left:494px;top:631px;font-size:14px;font-weight:bold;color:#111">Grand Total</div>
<div class="t" style="left:608px;width:109px;text-align:right;top:630px;font-size:15px;font-weight:bold;color:#111">$657,704.00</div>
<div class="a" style="left:489px;top:286px;width:121px;height:23px;border:2px solid #217346"></div>
<div class="a" style="left:605px;top:305px;width:6px;height:6px;background:#217346;border:1px solid #fff"></div>
<div class="a" style="left:0;top:774px;width:1110px;height:4px;background:#e4e4e4;border-top:1px solid #a8a8a8"></div>
<div class="a" style="left:100px;top:774px;width:57px;height:4px;background:#fff"></div>
<div class="a" style="left:990px;top:776px;width:120px;height:2px;background:#8a8a8a"></div>
<div class="a" style="left:784px;top:23px;width:268px;height:736px;background:#e6e6e6;border:1px solid #d0d0d0;box-shadow:1px 1px 3px rgba(0,0,0,.25)"></div>
<div class="t" style="left:799px;top:38px;font-size:26px;color:#2a6e47">PivotTable F..</div>
<div class="t" style="left:802px;top:80px;font-size:15.5px;color:#555;line-height:21px">Choose fields to add to<br>report:</div>
<div class="a" style="left:984px;top:82px;width:54px;height:33px;background:#fff;border:1px solid #c8c8c8"></div>
<div class="a" style="left:801px;top:138px;width:237px;height:25px;background:#fff;border:1px solid #bcbcbc"></div>
<div class="t" style="left:803px;top:142px;font-size:14.5px;color:#7a7a7a">Search</div>
<div class="a" style="left:801px;top:184px;width:237px;height:152px;background:#fafafa"></div>
<div class="a" style="left:803px;top:185px;width:17px;height:17px;border:1.3px solid #666;background:#fff"></div>
<div class="t" style="left:827px;top:188px;font-size:15px;font-weight:normal;color:#555">Date</div>
<div class="a" style="left:803px;top:211px;width:17px;height:17px;border:1.3px solid #666;background:#fff"></div>
<div class="t" style="left:827px;top:214px;font-size:15px;font-weight:bold;color:#333">Amount</div>
<div class="a" style="left:803px;top:238px;width:17px;height:17px;border:1.3px solid #666;background:#fff"></div>
<div class="t" style="left:827px;top:241px;font-size:15px;font-weight:bold;color:#333">Region</div>
<div class="a" style="left:803px;top:264px;width:17px;height:17px;border:1.3px solid #666;background:#fff"></div>
<div class="t" style="left:827px;top:267px;font-size:15px;font-weight:bold;color:#333">City</div>
<div class="t" style="left:803px;top:302px;font-size:15px;color:#555">More Tables...</div>
<div class="t" style="left:806px;top:364px;font-size:15px;color:#555">Drag fields between areas below:</div>
<div class="t" style="left:834px;top:408px;font-size:15px;color:#555">Filters</div>
<div class="t" style="left:953px;top:408px;font-size:15px;color:#555">Columns</div>
<div class="t" style="left:834px;top:561px;font-size:15px;color:#555">Rows</div>
<div class="t" style="left:953px;top:561px;font-size:15px;color:#555">Values</div>
<div class="a" style="left:921px;top:404px;width:1px;height:289px;background:#c8c8c8"></div>
<div class="a" style="left:805px;top:548px;width:234px;height:1px;background:#c8c8c8"></div>
<div class="a" style="left:805px;top:431px;width:108px;height:109px;background:#fbfbfb"></div>
<div class="a" style="left:924px;top:431px;width:115px;height:109px;background:#fbfbfb"></div>
<div class="a" style="left:805px;top:584px;width:108px;height:109px;background:#fbfbfb"></div>
<div class="a" style="left:924px;top:584px;width:115px;height:109px;background:#fbfbfb"></div>
<div class="a" style="left:806px;top:587px;width:106px;height:26px;background:#fff;border:1px solid #d4d4d4"></div>
<div class="t" style="left:816px;top:594px;font-size:13px;color:#444">Region</div>
<div class="a" style="left:890px;top:597px;width:0;height:0;border-left:4.7px solid transparent;border-right:4.7px solid transparent;border-top:5.3px solid #333"></div>
<div class="a" style="left:806px;top:615px;width:106px;height:26px;background:#fff;border:1px solid #d4d4d4"></div>
<div class="t" style="left:816px;top:622px;font-size:13px;color:#444">City</div>
<div class="a" style="left:890px;top:625px;width:0;height:0;border-left:4.7px solid transparent;border-right:4.7px solid transparent;border-top:5.3px solid #333"></div>
<div class="a" style="left:925px;top:587px;width:113px;height:26px;background:#fff;border:1px solid #d4d4d4"></div>
<div class="t" style="left:935px;top:594px;font-size:13px;color:#444">Sum of Am...</div>
<div class="a" style="left:1016px;top:597px;width:0;height:0;border-left:4.7px solid transparent;border-right:4.7px solid transparent;border-top:5.3px solid #333"></div>
<div class="a" style="left:808px;top:726px;width:17px;height:17px;border:1px solid #777;background:#fff"></div>
<div class="t" style="left:833px;top:728px;font-size:15px;color:#555">Defer Layout Up...</div>
<div class="a" style="left:979px;top:719px;width:59px;height:29px;background:#fafafa"></div>
<div class="t" style="left:984px;top:726px;font-size:15px;color:#aaa">Update</div>
<svg class="a" style="left:785px;top:23px" width="268" height="737" viewBox="785 23 268 737" fill="none">
<path d="M967.5,46.5 H978.5 L973,52.3 Z" fill="#666"/>
<path d="M1020,44 L1030.5,54.5 M1030.5,44 L1020,54.5" stroke="#666" stroke-width="2.6"/>
<path d="M1024,96.2 H1033 L1028.5,100.8 Z" fill="#666"/>
<path d="M1014.5,98.2 L1014.2,98.9 L1013.6,99.5 L1012.9,99.9 L1012.1,100.3 L1011.5,100.6 L1011.0,101.0 L1010.7,101.4 L1010.4,101.8 L1010.3,102.2 L1010.2,102.8 L1010.3,103.5 L1010.3,104.4 L1010.3,105.3 L1010.1,106.1 L1009.6,106.6 L1008.9,106.7 L1008.1,106.5 L1007.3,106.1 L1006.6,105.6 L1006.0,105.2 L1005.5,105.0 L1005.0,104.9 L1004.5,104.9 L1004.0,105.0 L1003.5,105.2 L1002.9,105.6 L1002.2,106.1 L1001.4,106.5 L1000.6,106.7 L999.9,106.6 L999.4,106.1 L999.2,105.3 L999.2,104.4 L999.2,103.5 L999.3,102.8 L999.2,102.2 L999.1,101.8 L998.8,101.4 L998.5,101.0 L998.0,100.6 L997.4,100.3 L996.6,99.9 L995.9,99.5 L995.3,98.9 L995.0,98.2 L995.3,97.5 L995.9,96.9 L996.6,96.5 L997.4,96.1 L998.0,95.8 L998.5,95.4 L998.8,95.0 L999.1,94.6 L999.2,94.2 L999.3,93.6 L999.2,92.9 L999.2,92.0 L999.2,91.1 L999.4,90.3 L999.9,89.8 L1000.6,89.7 L1001.4,89.9 L1002.2,90.3 L1002.9,90.8 L1003.5,91.2 L1004.0,91.4 L1004.5,91.5 L1005.0,91.5 L1005.5,91.4 L1006.0,91.2 L1006.6,90.8 L1007.3,90.3 L1008.1,89.9 L1008.9,89.7 L1009.6,89.8 L1010.1,90.3 L1010.3,91.1 L1010.3,92.0 L1010.3,92.9 L1010.2,93.6 L1010.3,94.2 L1010.4,94.6 L1010.7,95.0 L1011.0,95.4 L1011.5,95.8 L1012.1,96.1 L1012.9,96.5 L1013.6,96.9 L1014.2,97.5 Z" stroke="#333" stroke-width="1.3" stroke-linejoin="round"/>
<circle cx="1004.75" cy="98.2" r="3.1" stroke="#333" stroke-width="1.3"/>
<circle cx="1029.5" cy="147.3" r="6.8" stroke="#444" stroke-width="1.3"/>
<path d="M1024.6,152.3 L1018.2,158.6" stroke="#444" stroke-width="1.5"/>
<path d="M810,406.3 H825.3 V408.3 L819.5,414 V421 H815.8 V414 L810,408.3 Z" fill="#888"/>
<rect x="931" y="407.3" width="3.6" height="12.5" fill="#888"/>
<rect x="936" y="407.3" width="1.2" height="12.5" fill="#888"/>
<rect x="938.6" y="407.3" width="1.2" height="12.5" fill="#888"/>
<rect x="941.2" y="407.3" width="1.2" height="12.5" fill="#888"/>
<rect x="810.5" y="561.2" width="13" height="2" fill="#888"/>
<rect x="810.5" y="564.6" width="13" height="1" fill="#999"/>
<rect x="810.5" y="567" width="13" height="1" fill="#999"/>
<rect x="810.5" y="569.4" width="13" height="1" fill="#999"/>
<rect x="810.5" y="571.6" width="13" height="1" fill="#999"/>
<path d="M942,563.5 V561.8 H931.5 L937,567 L931.5,572.2 H942 V570.5" stroke="#888" stroke-width="1.2" stroke-linejoin="miter"/>
<g stroke="#606060" stroke-width="1.7" fill="none">
<path d="M807,220 L810.8,224.3 L817,215.8"/>
<path d="M807,246.3 L810.8,250.6 L817,242.1"/>
<path d="M807,272.6 L810.8,276.9 L817,268.4"/>
</g>
</svg>
</body></html>
